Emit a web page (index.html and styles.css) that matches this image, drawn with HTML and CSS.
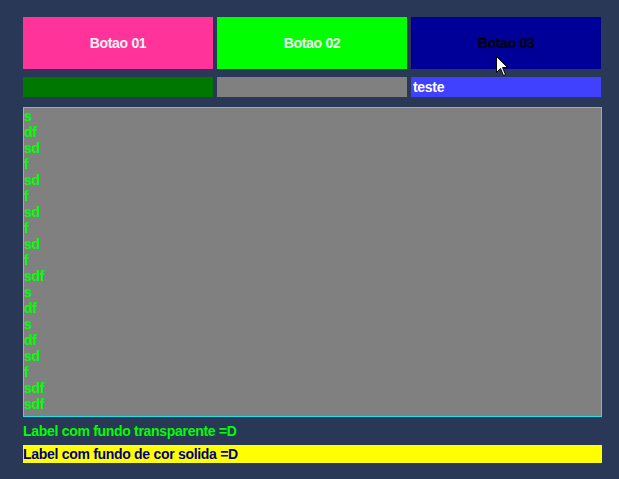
FILE: index.html
```html
<!DOCTYPE html>
<html>
<head>
<meta charset="utf-8">
<link rel="stylesheet" href="styles.css">
</head>
<body>
<div class="app">
  <div class="buttons">
    <div class="btn btn-pink">Botao 01</div>
    <div class="btn btn-green">Botao 02</div>
    <div class="btn btn-blue">Botao 03</div>
  </div>
  <div class="status">
    <div class="cell cell-green"></div>
    <div class="cell cell-gray"></div>
    <div class="cell cell-blue">teste</div>
  </div>
  <div class="memo">
    <div>s</div><div>df</div><div>sd</div><div>f</div><div>sd</div><div>f</div><div>sd</div><div>f</div><div>sd</div><div>f</div><div>sdf</div><div>s</div><div>df</div><div>s</div><div>df</div><div>sd</div><div>f</div><div>sdf</div><div>sdf</div>
  </div>
  <div class="label-transparent">Label com fundo transparente =D</div>
  <div class="label-solid">Label com fundo de cor solida =D</div>
</div>
<svg class="cursor" width="13" height="21" viewBox="0 0 13 21">
  <path d="M0.5,0.5 L0.5,16.5 L4.5,12.5 L7.5,19.5 L9.5,18.5 L6.5,11.5 L11.5,11.5 Z" fill="#ffffff" stroke="#000000" stroke-width="1"/>
</svg>
</body>
</html>
```
FILE: styles.css
```css
html, body {
  margin: 0;
  padding: 0;
  background: #283856;
  width: 619px;
  height: 479px;
  overflow: hidden;
}
body {
  font-family: "Liberation Sans", Arial, sans-serif;
  font-weight: bold;
  font-size: 14px;
  letter-spacing: -0.3px;
  position: relative;
}
.app {
  padding: 17px 0 0 23px;
  width: 579px;
}
.buttons {
  display: grid;
  grid-template-columns: 190px 190px 190px;
  column-gap: 4px;
  height: 52px;
}
.btn {
  display: flex;
  align-items: center;
  justify-content: center;
  color: #f4f4f4;
}
.btn-pink { background: #ff3399; }
.btn-green { background: #00ff00; }
.btn-blue { background: #000099; color: #000000; }
.status {
  display: grid;
  grid-template-columns: 190px 190px 190px;
  column-gap: 4px;
  height: 20px;
  margin-top: 8px;
}
.cell {
  line-height: 20px;
  padding-left: 2px;
  color: #ffffff;
}
.cell-green { background: #007800; }
.cell-gray { background: #808080; }
.cell-blue { background: #4040ff; }
.memo {
  margin-top: 10px;
  height: 310px;
  box-sizing: border-box;
  border: 1px solid #22e0e8;
  background: #808080;
  color: #00ff00;
  line-height: 16px;
  padding: 0;
  overflow: hidden;
}
.label-transparent {
  margin-top: 6px;
  height: 16px;
  line-height: 16px;
  color: #00ff00;
}
.label-solid {
  margin-top: 6px;
  height: 18px;
  line-height: 18px;
  background: #ffff00;
  color: #000080;
}
.cursor {
  position: absolute;
  left: 496px;
  top: 56px;
}
```
